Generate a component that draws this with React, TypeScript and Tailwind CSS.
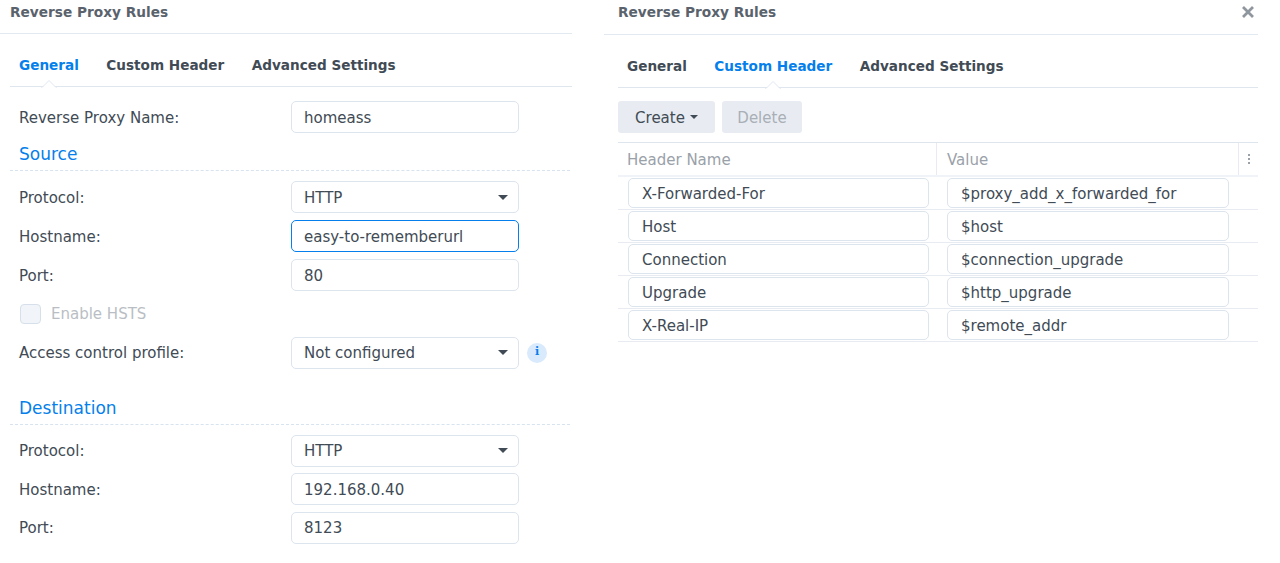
const font = "font-['DejaVu_Sans',sans-serif]";

function Tabs({ active }: { active: number }) {
  const tabs = ["General", "Custom Header", "Advanced Settings"];
  return (
    <div className="flex h-[36px] items-start gap-[27.5px] border-b border-[#e0e6ee] pl-[9px] text-[13.6px] font-bold leading-[17px] text-[#414b55]">
      {tabs.map((tab, i) => (
        <div key={tab} className={`relative h-[36px] pt-[6px] ${i === active ? "text-[#057feb]" : ""}`}>
          {tab}
          {i === active && (
            <svg className="absolute bottom-[-1px] left-1/2 -ml-[8px]" width="16" height="9" viewBox="0 0 16 9">
              <path d="M0 8.5H1L8 1.5L15 8.5H16V9H0Z" fill="#fff" />
              <path d="M0.5 8.5H1L8 1.5L15 8.5H15.5" fill="none" stroke="#e0e6ee" />
            </svg>
          )}
        </div>
      ))}
    </div>
  );
}

function Field({ value, select, focus }: { value: string; select?: boolean; focus?: boolean }) {
  return (
    <div className={`flex h-[32px] w-[228px] items-center justify-between rounded-[5px] border bg-white pr-[10px] pl-[12px] ${focus ? "border-[#057feb]" : "border-[#dce4ed]"}`}>
      <span className="pt-[2px]">{value}</span>
      {select && <span className="h-0 w-0 border-x-[5px] border-t-[5px] border-x-transparent border-t-[#414b55]" />}
    </div>
  );
}

function Row({ label, children }: { label: string; children: React.ReactNode }) {
  return (
    <div className="flex h-[32px] items-center pl-[9px]">
      <div className="w-[272px] pt-[2px]">{label}</div>
      {children}
    </div>
  );
}

function SectionTitle({ title }: { title: string }) {
  return (
    <div className="mr-[2px] h-[28px] border-b border-dashed border-[#d7e3ef] pl-[9px] pt-[1px] text-[17px] leading-[20px] text-[#057feb]">
      {title}
    </div>
  );
}

function GeneralPanel() {
  return (
    <div className="w-[572px] shrink-0">
      <div className="h-[34px] border-b border-[#e3e9f0] text-[13.7px] font-bold leading-[24px] text-[#5a636d]">
        <div className="pl-[10px]">Reverse Proxy Rules</div>
      </div>
      <div className="ml-[10px] mt-[17px]">
        <Tabs active={0} />
        <div className="mt-[14px]">
          <Row label="Reverse Proxy Name:">
            <Field value="homeass" />
          </Row>
        </div>
        <div className="mt-[10px]">
          <SectionTitle title="Source" />
        </div>
        <div className="mt-[10px] flex flex-col gap-[6.9px]">
          <Row label="Protocol:">
            <Field value="HTTP" select />
          </Row>
          <Row label="Hostname:">
            <Field value="easy-to-rememberurl" focus />
          </Row>
          <Row label="Port:">
            <Field value="80" />
          </Row>
          <div className="flex h-[32px] items-center gap-[10px] pl-[10px] text-[#b9bec4]">
            <span className="h-[20px] w-[21px] rounded-[4px] border border-[#d7e0ea] bg-[#f1f4f8]" />
            <span className="pt-[2px]">Enable HSTS</span>
          </div>
          <Row label="Access control profile:">
            <Field value="Not configured" select />
            <span className="ml-[8px] flex h-[20px] w-[20px] items-center justify-center rounded-full bg-[#d8eafc] font-['DejaVu_Serif',serif] text-[11px] font-bold text-[#057feb]">
              i
            </span>
          </Row>
        </div>
        <div className="mt-[28.4px]">
          <SectionTitle title="Destination" />
        </div>
        <div className="mt-[9.6px] flex flex-col gap-[6.5px]">
          <Row label="Protocol:">
            <Field value="HTTP" select />
          </Row>
          <Row label="Hostname:">
            <Field value="192.168.0.40" />
          </Row>
          <Row label="Port:">
            <Field value="8123" />
          </Row>
        </div>
      </div>
    </div>
  );
}

const headers = [
  ["X-Forwarded-For", "$proxy_add_x_forwarded_for"],
  ["Host", "$host"],
  ["Connection", "$connection_upgrade"],
  ["Upgrade", "$http_upgrade"],
  ["X-Real-IP", "$remote_addr"],
];

function CustomHeaderPanel() {
  return (
    <div className="ml-[32px] w-[654px] shrink-0">
      <div className="flex h-[35px] items-start justify-between border-b border-[#e3e9f0] pl-[14px] text-[13.7px] font-bold leading-[24px] text-[#5a636d]">
        <div>Reverse Proxy Rules</div>
        <svg className="mr-[4px] mt-[6px]" width="12" height="12" viewBox="0 0 12 12">
          <path d="M1 1L11 11M11 1L1 11" stroke="#8f969e" strokeWidth="2.8" />
        </svg>
      </div>
      <div className="ml-[14px] mt-[17px]">
        <Tabs active={1} />
        <div className="mt-[13px] flex gap-[7px]">
          <div className="flex h-[32px] w-[97px] items-center justify-center gap-[5px] rounded-[3px] bg-[#e8ecf2]">
            <span className="pt-[2px]">Create</span>
            <span className="h-0 w-0 border-x-[4px] border-t-[4px] border-x-transparent border-t-[#414b55]" />
          </div>
          <div className="flex h-[32px] w-[80px] items-center justify-center rounded-[3px] bg-[#e8ecf2] text-[#a9afb6]">
            <span className="pt-[2px]">Delete</span>
          </div>
        </div>
        <div className="mt-[9px] border-t border-[#dfe5ed]">
          <div className="flex h-[34px] items-center border-b-2 border-[#f0f3f7] text-[#9aa1a9]">
            <div className="h-full w-[319px] border-r border-[#e8ecf2] pl-[9px] leading-[34px]">Header Name</div>
            <div className="h-full w-[302px] border-r border-[#e8ecf2] pl-[10px] leading-[34px]">Value</div>
            <div className="flex flex-1 flex-col items-center gap-[2px]">
              <span className="h-[2px] w-[2px] bg-[#9aa1a9]" />
              <span className="h-[2px] w-[2px] bg-[#9aa1a9]" />
              <span className="h-[2px] w-[2px] bg-[#9aa1a9]" />
            </div>
          </div>
          {headers.map(([name, value]) => (
            <div key={name} className="flex h-[33px] items-center border-b border-[#e8ecf2] pl-[10px]">
              <div className="flex h-[30px] w-[301px] items-center rounded-[5px] border border-[#dce4ed] pl-[13px]">
                <span className="pt-[2px]">{name}</span>
              </div>
              <div className="ml-[18px] flex h-[30px] w-[282px] items-center rounded-[5px] border border-[#dce4ed] pl-[13px]">
                <span className="pt-[2px]">{value}</span>
              </div>
            </div>
          ))}
        </div>
      </div>
    </div>
  );
}

export default function App() {
  return (
    <div className={`flex h-[563px] w-[1280px] overflow-hidden bg-white text-[15px] text-[#414b55] ${font}`}>
      <GeneralPanel />
      <CustomHeaderPanel />
    </div>
  );
}
